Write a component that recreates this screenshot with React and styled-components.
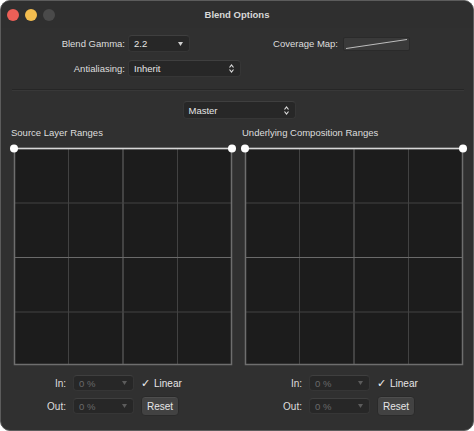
import React from "react";
import styled, { createGlobalStyle } from "styled-components";

const GlobalStyle = createGlobalStyle`
  html, body {
    margin: 0;
    padding: 0;
    background: #ffffff;
  }
  body {
    font-family: "Liberation Sans", Arial, sans-serif;
    font-size: 9.5px;
    color: #dedede;
  }
`;

const Window = styled.div`
  width: 474px;
  height: 431px;
  box-sizing: border-box;
  background: #303030;
  border: 1px solid #5c5c5c;
  border-radius: 10px;
  overflow: hidden;
  display: flex;
  flex-direction: column;
`;

const TitleBar = styled.div`
  height: 27px;
  display: grid;
  grid-template-columns: 1fr auto 1fr;
  align-items: center;
  padding: 0 6px;
  background: #2f2f2f;
`;

const Lights = styled.div`
  display: flex;
  gap: 6px;
`;

const Light = styled.span`
  width: 12px;
  height: 12px;
  border-radius: 50%;
  background: ${(p) => p.color};
`;

const Title = styled.div`
  font-weight: bold;
  font-size: 9.5px;
  color: #d8d8d8;
`;

const Form = styled.div`
  display: flex;
  flex-direction: column;
  gap: 8px;
  margin-top: 7px;
  padding-left: 11px;
`;

const FormRow = styled.div`
  display: flex;
  align-items: center;
  height: 17px;
`;

const FieldLabel = styled.div`
  width: ${(p) => p.width || 113}px;
  text-align: right;
  margin-right: 3px;
`;

const Select = styled.div`
  width: ${(p) => p.width}px;
  height: ${(p) => p.height || 17}px;
  box-sizing: border-box;
  display: flex;
  align-items: center;
  justify-content: space-between;
  padding: 0 6px 0 5px;
  background: #272727;
  border: 1px solid #363636;
  border-top-color: #3f3f3f;
  border-radius: 4px;
  color: ${(p) => (p.disabled ? "#6a6a6a" : "#e6e6e6")};
`;

const Spacer = styled.div`
  flex: 1;
`;

const CoverageLabel = styled.div`
  margin-right: 5px;
`;

const CoverageBox = styled.div`
  width: 67px;
  height: 14px;
  margin-right: 63px;
  box-sizing: border-box;
  background: #3a3a3a;
  border: 1px solid #2a2a2a;
  border-radius: 2px;
  display: flex;
`;

const Separator = styled.div`
  height: 1px;
  margin: 12px 9px 0 11px;
  background: #262626;
  box-shadow: 0 1px 0 #383838;
`;

const Centered = styled.div`
  display: flex;
  justify-content: center;
  padding-left: 4px;
  margin-top: 11px;
`;

const Panels = styled.div`
  display: grid;
  grid-template-columns: 221px 221px;
  column-gap: 10px;
  padding-left: 10px;
  margin-top: 8px;
`;

const Panel = styled.div`
  display: flex;
  flex-direction: column;
`;

const SectionLabel = styled.div`
  height: 12px;
  line-height: 12px;
  margin-bottom: 9px;
`;

const GraphSvg = styled.svg`
  margin-left: 3px;
  overflow: visible;
  display: block;
`;

const Controls = styled.div`
  display: grid;
  grid-template-columns: ${(p) => p.labelWidth}px 61px auto;
  grid-template-rows: 16px 20px;
  column-gap: 7px;
  row-gap: 5px;
  align-items: center;
  margin-top: 10px;
`;

const ControlLabel = styled.div`
  text-align: right;
  font-size: 10px;
`;

const Check = styled.label`
  display: flex;
  align-items: center;
  gap: 3px;
  font-size: 10px;
  color: #e6e6e6;
`;

const CheckMark = styled.span`
  width: 10px;
  font-size: 11px;
  line-height: 10px;
  color: #f0f0f0;
`;

const Button = styled.button`
  width: 38px;
  height: 20px;
  padding: 0;
  font-family: inherit;
  font-size: 10px;
  color: #e6e6e6;
  background: #424242;
  border: 1px solid #2a2a2a;
  border-radius: 4px;
  box-shadow: inset 0 1px 0 #4e4e4e;
`;

const DownArrow = ({ color = "#d0d0d0" }) => (
  <svg width="5" height="4" viewBox="0 0 5 4">
    <polygon points="0,0 5,0 2.5,4" fill={color} />
  </svg>
);

const UpDown = () => (
  <svg width="5" height="9" viewBox="0 0 5 9">
    <polyline points="0.5,3.5 2.5,1 4.5,3.5" fill="none" stroke="#d8d8d8" strokeWidth="1.2" />
    <polyline points="0.5,5.5 2.5,8 4.5,5.5" fill="none" stroke="#d8d8d8" strokeWidth="1.2" />
  </svg>
);

const CoverageCurve = () => (
  <svg width="65" height="12" viewBox="0 0 65 12">
    <line x1="2" y1="10.5" x2="63" y2="1.5" stroke="#bdbdbd" strokeWidth="1" />
  </svg>
);

const Graph = () => {
  const w = 218;
  const h = 217;
  const xs = [54.5, 109, 163.5];
  const ys = [55, 109.5, 164];
  return (
    <GraphSvg width={w} height={h} viewBox={`0 0 ${w} ${h}`}>
      <rect x="0" y="0" width={w} height={h} fill="#1c1c1c" />
      {xs.map((x, i) => (
        <line key={"v" + i} x1={x} y1="0" x2={x} y2={h} stroke={i === 1 ? "#6a6a6a" : "#424242"} strokeWidth="1" />
      ))}
      {ys.map((y, i) => (
        <line key={"h" + i} x1="0" y1={y} x2={w} y2={y} stroke={i === 1 ? "#6a6a6a" : "#424242"} strokeWidth="1" />
      ))}
      <rect x="0.5" y="0.5" width={w - 1} height={h - 1} fill="none" stroke="#6e6e6e" strokeWidth="1.5" />
      <line x1="0" y1="0.5" x2={w} y2="0.5" stroke="#d6d6d6" strokeWidth="1.5" />
      <circle cx="0" cy="0.5" r="4" fill="#ffffff" />
      <circle cx={w} cy="0.5" r="4" fill="#ffffff" />
    </GraphSvg>
  );
};

const RangePanel = ({ title, labelWidth }) => (
  <Panel>
    <SectionLabel>{title}</SectionLabel>
    <Graph />
    <Controls labelWidth={labelWidth}>
      <ControlLabel>In:</ControlLabel>
      <Select width={61} height={16} disabled>
        <span>0 %</span>
        <DownArrow color="#5c5c5c" />
      </Select>
      <Check>
        <CheckMark>✓</CheckMark>
        Linear
      </Check>
      <ControlLabel>Out:</ControlLabel>
      <Select width={61} height={16} disabled>
        <span>0 %</span>
        <DownArrow color="#5c5c5c" />
      </Select>
      <Button>Reset</Button>
    </Controls>
  </Panel>
);

export default function App() {
  return (
    <>
      <GlobalStyle />
      <Window>
        <TitleBar>
          <Lights>
            <Light color="#ec5f57" />
            <Light color="#f3bd4f" />
            <Light color="#4a4a4a" />
          </Lights>
          <Title>Blend Options</Title>
          <div />
        </TitleBar>
        <Form>
          <FormRow>
            <FieldLabel>Blend Gamma:</FieldLabel>
            <Select width={62}>
              <span>2.2</span>
              <DownArrow />
            </Select>
            <Spacer />
            <CoverageLabel>Coverage Map:</CoverageLabel>
            <CoverageBox>
              <CoverageCurve />
            </CoverageBox>
          </FormRow>
          <FormRow>
            <FieldLabel>Antialiasing:</FieldLabel>
            <Select width={113}>
              <span>Inherit</span>
              <UpDown />
            </Select>
          </FormRow>
        </Form>
        <Separator />
        <Centered>
          <Select width={113} height={18}>
            <span>Master</span>
            <UpDown />
          </Select>
        </Centered>
        <Panels>
          <RangePanel title="Source Layer Ranges" labelWidth={55} />
          <RangePanel title="Underlying Composition Ranges" labelWidth={60} />
        </Panels>
      </Window>
    </>
  );
}
